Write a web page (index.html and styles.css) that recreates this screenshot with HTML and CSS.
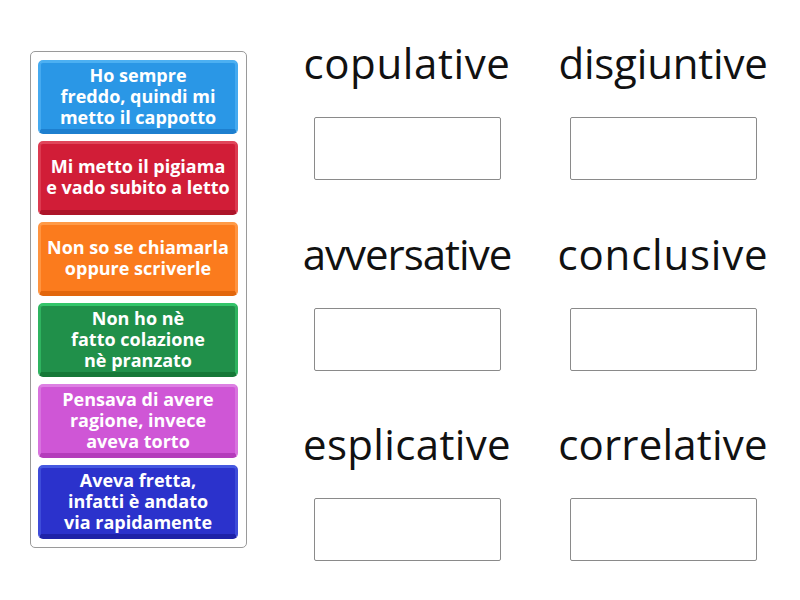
FILE: index.html
```html
<!DOCTYPE html>
<html lang="it">
<head>
<meta charset="utf-8">
<link rel="stylesheet" href="styles.css">
</head>
<body>
<div class="page">
  <div class="tray">
    <div class="card blue">Ho sempre<br>freddo, quindi mi<br>metto il cappotto</div>
    <div class="card red">Mi metto il pigiama<br>e vado subito a letto</div>
    <div class="card orange">Non so se chiamarla<br>oppure scriverle</div>
    <div class="card green">Non ho nè<br>fatto colazione<br>nè pranzato</div>
    <div class="card purple">Pensava di avere<br>ragione, invece<br>aveva torto</div>
    <div class="card navy">Aveva fretta,<br>infatti è andato<br>via rapidamente</div>
  </div>
  <div class="targets">
    <div class="cell"><div class="label fit-a">copulative</div><div class="box"></div></div>
    <div class="cell"><div class="label fit-b">disgiuntive</div><div class="box"></div></div>
    <div class="cell"><div class="label fit-c">avversative</div><div class="box"></div></div>
    <div class="cell"><div class="label fit-d">conclusive</div><div class="box"></div></div>
    <div class="cell"><div class="label fit-e">esplicative</div><div class="box"></div></div>
    <div class="cell"><div class="label fit-f">correlative</div><div class="box"></div></div>
  </div>
</div>
</body>
</html>
```
FILE: styles.css
```css
html, body {
  margin: 0;
  padding: 0;
  background: #ffffff;
}
body {
  width: 800px;
  height: 600px;
  overflow: hidden;
  font-family: "Open Sans", "Noto Sans", sans-serif;
}
.page {
  display: flex;
  align-items: flex-start;
  padding: 51px 0 0 30px;
}
.tray {
  width: 200px;
  border: 1px solid #9a9a9a;
  border-radius: 5px;
  padding: 8px 8px 8px 7px;
  display: flex;
  flex-direction: column;
  gap: 7px;
}
.card {
  box-sizing: border-box;
  height: 74px;
  border-radius: 5px;
  border: 3px solid;
  border-bottom-width: 5px;
  display: flex;
  align-items: center;
  justify-content: center;
  text-align: center;
  color: #ffffff;
  font-weight: 700;
  font-size: 18px;
  line-height: 21px;
  padding: 0 2px;
  white-space: nowrap;
}
.blue   { background: #2a97e6; border-color: #4cb0f2 #45aaf0 #1d7fcf; }
.red    { background: #d11d37; border-color: #e0455a #dc3a50 #ad1429; }
.orange { background: #fb7b1d; border-color: #ff9a47 #ff9440 #e2660c; }
.green  { background: #20904a; border-color: #33c56a #2eb35f #157837; }
.purple { background: #cf56d6; border-color: #dd80e3 #d873de #b43cbb; }
.navy   { background: #2b32cc; border-color: #4558e0 #3e4cd9 #1e22a8; }

.targets {
  margin-left: 32px;
  margin-top: -17px;
  display: grid;
  grid-template-columns: 256px 256px;
  row-gap: 44.5px;
}
.cell {
  display: flex;
  flex-direction: column;
  align-items: center;
}
.label {
  font-size: 42px;
  line-height: 57px;
  color: #111111;
  white-space: nowrap;
}
.fit-a { letter-spacing: 0.6px; }
.fit-b { letter-spacing: -0.2px; }
.fit-c { letter-spacing: -1px; }
.fit-d { letter-spacing: 0.8px; }
.fit-e { letter-spacing: 0.35px; }
.fit-f { letter-spacing: 0.2px; }
.box {
  box-sizing: border-box;
  width: 187px;
  height: 63px;
  margin-top: 26px;
  border: 1px solid #8a8a8a;
  border-radius: 2px;
  background: #ffffff;
}
```
